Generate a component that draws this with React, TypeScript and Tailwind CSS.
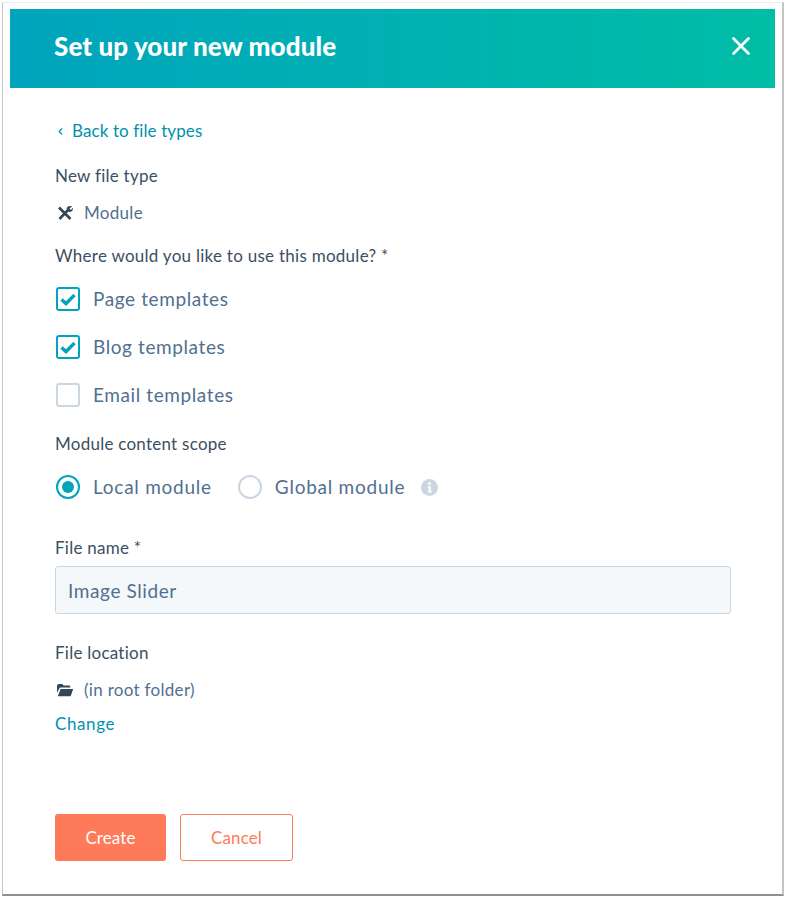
import { ChevronLeft, X } from "lucide-react";

const font = { fontFamily: "Lato, sans-serif" };

function CheckRow({ label, checked }: { label: string; checked?: boolean }) {
  return (
    <label className="flex h-[24px] items-center gap-[13px]">
      <span
        className={
          checked
            ? "flex h-[24px] w-[24px] items-center justify-center rounded-[3px] border-2 border-[#00a4bd] bg-white"
            : "flex h-[24px] w-[24px] items-center justify-center rounded-[3px] border-2 border-[#cbd6e2] bg-white"
        }
      >
        {checked && (
          <svg width="16" height="13" viewBox="0 0 16 13" fill="none">
            <path d="M1.5 6.5 6 10.6 14.5 2" stroke="#00a4bd" strokeWidth="3.4" />
          </svg>
        )}
      </span>
      <span className="text-[19px] tracking-[0.6px] text-[#516f90]">{label}</span>
    </label>
  );
}

function Radio({ label, checked }: { label: string; checked?: boolean }) {
  return (
    <label className="flex h-[24px] items-center gap-[13px]">
      <span
        className={
          checked
            ? "flex h-[24px] w-[24px] items-center justify-center rounded-full border-2 border-[#00a4bd] bg-white"
            : "flex h-[24px] w-[24px] items-center justify-center rounded-full border-2 border-[#cbd6e2] bg-white"
        }
      >
        {checked && <span className="h-[12px] w-[12px] rounded-full bg-[#00a4bd]" />}
      </span>
      <span className="text-[19px] tracking-[0.75px] text-[#516f90]">{label}</span>
    </label>
  );
}

function ToolsIcon() {
  return (
    <svg width="18" height="16" viewBox="0 0 18 16" fill="none" className="ml-[1px]">
      <path d="M3 2.5 14.5 14" stroke="#33475b" strokeWidth="2.6" />
      <path d="M3.5 14 12 5" stroke="#33475b" strokeWidth="2.6" />
      <path d="M10.5 3.5C11.5 1.2 14 .6 16 1.4L13.5 3.6 14.8 5 16.8 2.8C17.4 5 15.8 7.4 12.8 7Z" fill="#33475b" />
    </svg>
  );
}

function FolderIcon() {
  return (
    <svg width="18" height="14" viewBox="0 0 18 14" fill="#33475b" className="ml-[1px]">
      <path d="M1 3.2C1 2 1.7 1 3 1h3.2l1.6 1.6H13c.8 0 1.3.5 1.3 1.3v.7H5.2c-1 0-1.7.4-2.1 1.3L1 10Z" />
      <path d="M4.6 6h12.6l-2.3 6.4c-.2.6-.7.9-1.3.9H1.8Z" />
    </svg>
  );
}

function InfoIcon() {
  return (
    <svg width="17" height="17" viewBox="0 0 17 17">
      <circle cx="8.5" cy="8.5" r="8.5" fill="#cbd6e2" />
      <rect x="7.2" y="3.4" width="2.6" height="2.4" fill="#ffffff" />
      <path d="M6.6 7.2h3.2v5h1v1.4H6.6v-1.4h1v-3.6h-1Z" fill="#ffffff" />
    </svg>
  );
}

export default function App() {
  return (
    <div className="h-[898px] w-[785px] bg-white pb-[2px] pl-[2px] pr-[1px] pt-[2px]" style={font}>
      <div className="h-full border-b-2 border-l border-r-2 border-t border-b-[#8f8f8f] border-l-[#c4c4c4] border-r-[#c4c4c4] border-t-[#ececec] bg-white pl-[7px] pr-[7px] pt-[6px]">
        <header className="flex h-[79px] items-center justify-between bg-gradient-to-r from-[#00a4bd] to-[#00bda5] pl-[44px] pr-[19px]">
          <h1 className="mt-[-4px] text-[26px] font-black tracking-[0.1px] text-white">Set up your new module</h1>
          <X size={30} strokeWidth={2.2} className="mt-[-6px] text-white" />
        </header>

        <main className="pl-[45px]">
          <a className="mt-[32px] flex h-[22px] items-center gap-[6px] text-[17px] tracking-[0.1px] text-[#0091ae]">
            <ChevronLeft size={11} strokeWidth={2.4} />
            Back to file types
          </a>

          <p className="mt-[23px] h-[22px] text-[17px] leading-[22px] tracking-[0.25px] text-[#3b4f64]">New file type</p>
          <div className="mt-[15px] flex h-[22px] items-center gap-[10px] text-[17px] tracking-[0.3px] text-[#516f90]">
            <ToolsIcon />
            Module
          </div>

          <p className="mt-[21px] h-[22px] text-[17px] leading-[22px] tracking-[0.27px] text-[#3b4f64]">
            Where would you like to use this module? *
          </p>
          <div className="mt-[20px] flex flex-col gap-[24px] pl-[1px]">
            <CheckRow label="Page templates" checked />
            <CheckRow label="Blog templates" checked />
            <CheckRow label="Email templates" />
          </div>

          <p className="mt-[26px] h-[22px] text-[17px] leading-[22px] tracking-[0.25px] text-[#3b4f64]">Module content scope</p>
          <div className="mt-[20px] flex items-center gap-[26px] pl-[1px]">
            <Radio label="Local module" checked />
            <div className="flex items-center gap-[16px]">
              <Radio label="Global module" />
              <InfoIcon />
            </div>
          </div>

          <p className="mt-[38px] h-[22px] text-[17px] leading-[22px] tracking-[0.25px] text-[#3b4f64]">File name *</p>
          <input
            readOnly
            value="Image Slider"
            className="mt-[7px] block h-[48px] w-[676px] rounded-[3px] border border-[#cbd6e2] bg-[#f5f8fa] px-[12px] text-[19px] tracking-[0.6px] text-[#516f90]"
          />

          <p className="mt-[28px] h-[22px] text-[17px] leading-[22px] tracking-[0.25px] text-[#3b4f64]">File location</p>
          <div className="mt-[15px] flex h-[22px] items-center gap-[10px] text-[17px] tracking-[0.3px] text-[#516f90]">
            <FolderIcon />
            (in root folder)
          </div>
          <a className="mt-[12px] block h-[22px] text-[17px] leading-[22px] tracking-[0.6px] text-[#0091ae]">Change</a>

          <div className="mt-[79px] flex gap-[14px]">
            <button className="h-[47px] w-[111px] rounded-[3px] bg-[#ff7a59] text-[17px] tracking-[0.1px] text-white">Create</button>
            <button className="h-[47px] w-[113px] rounded-[3px] border border-[#ff7a59] bg-white text-[17px] tracking-[0.1px] text-[#ff7a59]">
              Cancel
            </button>
          </div>
        </main>
      </div>
    </div>
  );
}
